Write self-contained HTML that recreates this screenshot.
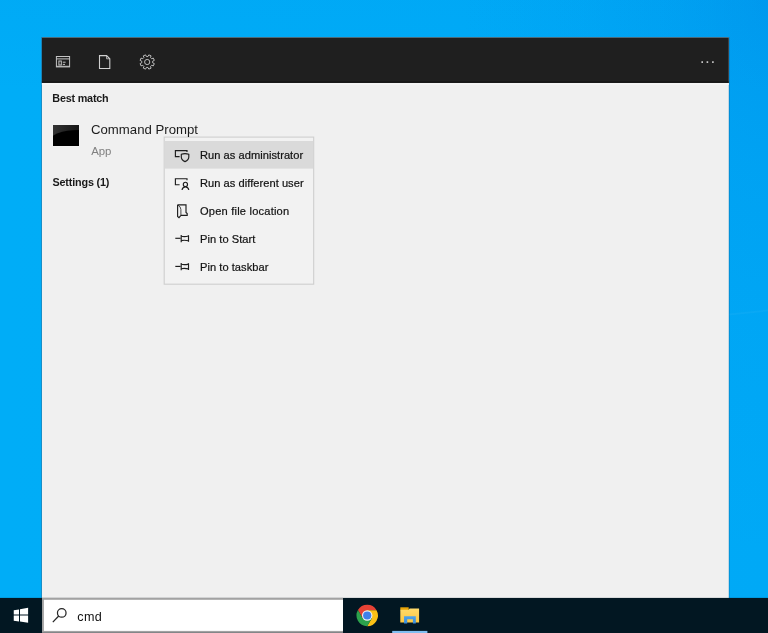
<!DOCTYPE html>
<html>
<head>
<meta charset="utf-8">
<title>Search</title>
<style>
html,body{margin:0;padding:0;}
body{width:768px;height:633px;overflow:hidden;position:relative;font-family:"Liberation Sans",sans-serif;
 background:linear-gradient(90deg,#00adf7 0%,#00abf7 60%,#00a9f6 100%);}
.abs{position:absolute;}
#bgshade{left:0;top:0;width:768px;height:633px;background:radial-gradient(ellipse 310px 560px at 100% 0%,rgba(0,100,210,0.20) 0%,rgba(0,100,210,0.10) 30%,rgba(0,100,210,0.04) 60%,rgba(0,100,210,0) 100%),linear-gradient(180deg,rgba(0,90,200,0.03) 0%,rgba(0,90,200,0) 15%);}
.t{position:absolute;white-space:nowrap;line-height:1;color:#111;}
#bm{left:52.3px;top:93px;font-size:10.8px;letter-spacing:-0.2px;font-weight:bold;color:#1a1a1a;}
#cp{left:91px;top:123px;font-size:13.2px;color:#1c1c1c;}
#app{left:91.2px;top:146px;font-size:11.4px;color:#808080;}
#st{left:52.5px;top:177px;font-size:10.8px;letter-spacing:-0.17px;font-weight:bold;color:#1a1a1a;}
#cmdico{left:53.1px;top:125.1px;width:26.2px;height:20.5px;background:linear-gradient(100deg,#343434 0%,#262626 40%,#121212 100%);overflow:hidden;box-shadow:0 0 0 0.6px rgba(255,255,255,0.3);}
.mi{font-size:11.1px;color:#111;left:200px;letter-spacing:0.04px;-webkit-text-stroke:0.2px #111;}
#cmd{left:77.2px;top:611px;font-size:12.6px;letter-spacing:0.4px;color:#111;}
</style>
</head>
<body>
<div id="bgshade" class="abs"></div>
<svg class="abs" style="left:0;top:0" width="768" height="633" viewBox="0 0 768 633"><polygon points="700,316.5 768,309.5 768,311.5 700,318.5" fill="rgba(255,255,255,0.035)"/><polygon points="700,318.5 768,311.5 768,598 700,598" fill="rgba(0,200,255,0.03)"/></svg>
<svg class="abs" style="left:0;top:0" width="768" height="633" viewBox="0 0 768 633">
 <rect x="41.2" y="37.2" width="688.2" height="561" fill="rgba(0,40,80,0.38)"/>
 <rect x="41.9" y="37.5" width="686.9" height="561" fill="#f0f0f0"/>
 <rect x="41.9" y="82.8" width="686.9" height="2.2" fill="#f4f4f4"/>
 <rect x="41.9" y="37.5" width="686.9" height="45.3" fill="#1f1f1f"/>
 <rect x="41.9" y="81.6" width="686.9" height="1.2" fill="#0f0f0f"/>
</svg>

<!-- header icons -->
<svg class="abs" style="left:0;top:0;filter:blur(0.3px)" width="768" height="633" viewBox="0 0 768 633" fill="none">
 <!-- apps icon -->
 <g stroke="#c4c4c4" stroke-width="1">
  <rect x="56.4" y="56.5" width="13.2" height="10.4"/>
  <line x1="56.4" y1="58.9" x2="69.6" y2="58.9"/>
  <line x1="56.4" y1="66.3" x2="69.6" y2="66.3"/>
  <rect x="58.9" y="61" width="2.4" height="4"/>
  <line x1="62.8" y1="62.2" x2="65.6" y2="62.2"/>
  <line x1="62.8" y1="64.4" x2="65" y2="64.4"/>
 </g>
 <!-- document icon -->
 <g stroke="#d0d0d0" stroke-width="1.1">
  <path d="M99.5,55.6 H106.6 L109.8,58.8 V68.5 H99.5 Z"/>
  <path d="M106.6,55.6 V58.8 H109.8" stroke-width="0.8"/>
 </g>
 <!-- gear icon -->
 <g stroke="#bdbdbd" stroke-width="1" id="gear">
  <circle cx="147.2" cy="62" r="2.6"/>
  <path d="M152.64,62.78 L154.32,63.61 L153.37,65.89 L151.60,65.30 L150.50,66.40 L151.09,68.17 L148.81,69.12 L147.98,67.44 L146.42,67.44 L145.59,69.12 L143.31,68.17 L143.90,66.40 L142.80,65.30 L141.03,65.89 L140.08,63.61 L141.76,62.78 L141.76,61.22 L140.08,60.39 L141.03,58.11 L142.80,58.70 L143.90,57.60 L143.31,55.83 L145.59,54.88 L146.42,56.56 L147.98,56.56 L148.81,54.88 L151.09,55.83 L150.50,57.60 L151.60,58.70 L153.37,58.11 L154.32,60.39 L152.64,61.22 Z" stroke-linejoin="round"/>
 </g>
 <!-- dots -->
 <g fill="#d8d8d8">
  <rect x="701.4" y="61.3" width="1.6" height="1.6"/>
  <rect x="706.6" y="61.3" width="1.6" height="1.6"/>
  <rect x="712.1" y="61.3" width="1.6" height="1.6"/>
 </g>
</svg>

<div id="cmdico" class="abs"><div class="abs" style="left:-4.1px;top:5.3px;width:60px;height:22.8px;border-radius:50%;background:#000;"></div><div class="abs" style="left:0;top:16.7px;width:30px;height:10px;background:#000;"></div></div>

<svg class="abs" style="left:0;top:0" width="768" height="633" viewBox="0 0 768 633">
 <rect x="164.2" y="137.1" width="149.5" height="147.1" fill="#f2f2f2" stroke="#cecece" stroke-width="1.1"/>
 <rect x="164.75" y="141" width="148.4" height="27.6" fill="#dadada"/>
</svg>

<svg class="abs" style="left:0;top:0;filter:blur(0.3px)" width="768" height="633" viewBox="0 0 768 633" fill="none" stroke="#1e1e1e" stroke-width="1.15">
 <!-- run as admin -->
 <path d="M179.6,156.6 H175.4 V150.6 H187 V152"/>
 <path d="M181.3,154.3 Q185,152.8 188.8,154.3 V157 Q188.8,160 185,161.6 Q181.3,160 181.3,157 Z"/>
 <!-- run as different user -->
 <path d="M179.6,184.7 H175.4 V178.7 H187 V180.2"/>
 <circle cx="185.4" cy="184.4" r="2.1"/>
 <path d="M182,190 Q182.6,186.8 185.4,186.8 Q188.2,186.8 188.8,190"/>
 <!-- open file location -->
 <path d="M177.6,204.9 H186 V212.4 L187.2,213.6 V215.4 H181"/>
 <path d="M177.6,204.9 V216.4 L179,217.6 L180.9,215.4"/>
 <path d="M177.6,204.9 Q180.9,206.5 180.9,209.5 V215.4" stroke-width="0.8"/>
 <!-- pin 1 -->
 <g id="pin1">
 <path d="M175.3,238.3 H180.6"/>
 <path d="M181.2,234.9 V242.2 M188.5,235.2 V241.8"/>
 <path d="M181.2,236.2 Q184.5,237 188.5,236 M181.2,240.6 Q184.5,239.8 188.5,240.8"/>
 </g>
 <g transform="translate(0,28.1)">
 <path d="M175.3,238.3 H180.6"/>
 <path d="M181.2,234.9 V242.2 M188.5,235.2 V241.8"/>
 <path d="M181.2,236.2 Q184.5,237 188.5,236 M181.2,240.6 Q184.5,239.8 188.5,240.8"/>
 </g>
</svg>

<svg class="abs" style="left:0;top:0" width="768" height="633" viewBox="0 0 768 633">
 <rect x="0" y="597.9" width="768" height="36" fill="#021722"/>
 <rect x="42" y="597.9" width="301" height="34.9" fill="#a2a2a2"/>
 <rect x="43.9" y="599.8" width="299.1" height="31.1" fill="#fff"/>
 <rect x="392.2" y="630.9" width="35.2" height="2.4" fill="#80bef0"/>
</svg>

<svg class="abs" style="left:0;top:0;filter:blur(0.3px)" width="768" height="633" viewBox="0 0 768 633">
 <!-- windows logo -->
 <g fill="#fff">
  <polygon points="13.75,610.2 19,609.4 19,614.5 13.75,614.5"/>
  <polygon points="20,609.2 28.1,607.8 28.1,614.5 20,614.5"/>
  <polygon points="13.75,615.4 19,615.4 19,621.5 13.75,620.8"/>
  <polygon points="20,615.4 28.1,615.4 28.1,622.8 20,621.6"/>
 </g>
 <!-- search icon -->
 <g fill="none" stroke="#262626" stroke-width="1.25">
  <circle cx="61.75" cy="612.9" r="4.3"/>
  <line x1="58.7" y1="616" x2="52.8" y2="622.1"/>
 </g>
 <!-- chrome -->
 <g id="chrome">
  <path d="M362.61,618.15 L357.96,610.10 A10.7,10.7 0 0 1 376.50,610.20 L367.20,610.20 L367.20,615.50 Z" fill="#e64235"/>
  <path d="M367.20,610.20 L376.50,610.20 A10.7,10.7 0 0 1 367.14,626.20 L371.79,618.15 L367.20,615.50 Z" fill="#fbc116"/>
  <path d="M371.79,618.15 L367.14,626.20 A10.7,10.7 0 0 1 357.96,610.10 L362.61,618.15 L367.20,615.50 Z" fill="#2ca24c"/>
  <circle cx="367.2" cy="615.5" r="5.2" fill="#f3f3f3"/>
  <circle cx="367.2" cy="615.5" r="4.1" fill="#3f80ea"/>
 </g>
 <!-- explorer -->
 <defs>
  <linearGradient id="fg" x1="0" y1="0" x2="0" y2="1"><stop offset="0" stop-color="#ffda6a"/><stop offset="1" stop-color="#fcc742"/></linearGradient>
  <linearGradient id="bg2" x1="0" y1="0" x2="0" y2="1"><stop offset="0" stop-color="#4fa3ea"/><stop offset="1" stop-color="#378cdb"/></linearGradient>
 </defs>
 <g>
  <rect x="400.3" y="607.3" width="8.4" height="3" fill="#e8a508"/>
  <path d="M400.3,609.8 H408.7 L409.6,608.6 H419.1 V622.5 H400.3 Z" fill="url(#fg)"/>
  <path d="M404.05,623.6 V616.2 H415.8 V623.6 H412.9 V619.2 H407.2 V623.6 Z" fill="url(#bg2)"/>
 </g>
</svg>
<div class="abs" id="txt" style="left:0;top:0;width:768px;height:633px;will-change:transform;filter:blur(0.3px)">
<div id="bm" class="t">Best match</div>
<div id="cp" class="t">Command Prompt</div>
<div id="app" class="t">App</div>
<div id="st" class="t">Settings (1)</div>
<div class="t mi" style="top:149.8px">Run as administrator</div>
<div class="t mi" style="top:177.9px">Run as different user</div>
<div class="t mi" style="top:206px;letter-spacing:0.2px">Open file location</div>
<div class="t mi" style="top:234.1px">Pin to Start</div>
<div class="t mi" style="top:262.2px">Pin to taskbar</div>
<div id="cmd" class="t">cmd</div>
</div>
</body>
</html>
